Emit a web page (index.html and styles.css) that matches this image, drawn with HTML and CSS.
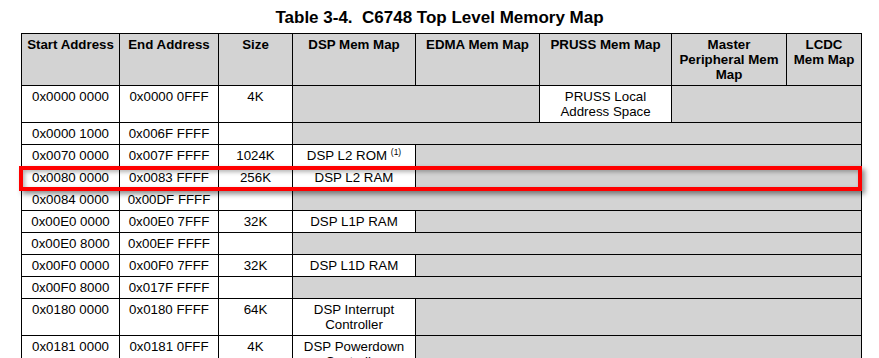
FILE: index.html
```html
<!DOCTYPE html>
<html>
<head>
<meta charset="utf-8">
<link rel="stylesheet" href="styles.css">
</head>
<body>
<div class="page">
  <h1 class="title">Table 3-4.&nbsp; C6748 Top Level Memory Map</h1>
  <div class="table-wrap">
    <table class="memmap">
      <colgroup>
        <col class="c-start"><col class="c-end"><col class="c-size"><col class="c-dsp"><col class="c-edma"><col class="c-pruss"><col class="c-master"><col class="c-lcdc">
      </colgroup>
      <thead>
        <tr>
          <th>Start Address</th>
          <th>End Address</th>
          <th>Size</th>
          <th>DSP Mem Map</th>
          <th>EDMA Mem Map</th>
          <th>PRUSS Mem Map</th>
          <th>Master Peripheral Mem Map</th>
          <th>LCDC Mem Map</th>
        </tr>
      </thead>
      <tbody>
        <tr>
          <td>0x0000 0000</td><td>0x0000 0FFF</td><td>4K</td>
          <td class="gray" colspan="2"></td>
          <td>PRUSS Local Address Space</td>
          <td class="gray" colspan="2"></td>
        </tr>
        <tr>
          <td>0x0000 1000</td><td>0x006F FFFF</td><td></td>
          <td class="gray" colspan="5"></td>
        </tr>
        <tr>
          <td>0x0070 0000</td><td>0x007F FFFF</td><td>1024K</td>
          <td>DSP L2 ROM <sup class="note">(1)</sup></td>
          <td class="gray" colspan="4"></td>
        </tr>
        <tr>
          <td>0x0080 0000</td><td>0x0083 FFFF</td><td>256K</td>
          <td>DSP L2 RAM</td>
          <td class="gray" colspan="4"></td>
        </tr>
        <tr>
          <td>0x0084 0000</td><td>0x00DF FFFF</td><td></td>
          <td class="gray" colspan="5"></td>
        </tr>
        <tr>
          <td>0x00E0 0000</td><td>0x00E0 7FFF</td><td>32K</td>
          <td>DSP L1P RAM</td>
          <td class="gray" colspan="4"></td>
        </tr>
        <tr>
          <td>0x00E0 8000</td><td>0x00EF FFFF</td><td></td>
          <td class="gray" colspan="5"></td>
        </tr>
        <tr>
          <td>0x00F0 0000</td><td>0x00F0 7FFF</td><td>32K</td>
          <td>DSP L1D RAM</td>
          <td class="gray" colspan="4"></td>
        </tr>
        <tr>
          <td>0x00F0 8000</td><td>0x017F FFFF</td><td></td>
          <td class="gray" colspan="5"></td>
        </tr>
        <tr>
          <td>0x0180 0000</td><td>0x0180 FFFF</td><td>64K</td>
          <td>DSP Interrupt Controller</td>
          <td class="gray" colspan="4"></td>
        </tr>
        <tr>
          <td>0x0181 0000</td><td>0x0181 0FFF</td><td>4K</td>
          <td>DSP Powerdown Controller</td>
          <td class="gray" colspan="4"></td>
        </tr>
      </tbody>
    </table>
    <div class="highlight"></div>
  </div>
</div>
</body>
</html>
```
FILE: styles.css
```css
html, body {
  margin: 0;
  padding: 0;
  background: #ffffff;
  overflow: hidden;
}
body {
  font-family: "Liberation Sans", Arial, sans-serif;
  color: #000;
}
.page {
  width: 879px;
  height: 358px;
  overflow: hidden;
}
.title {
  margin: 8px 0 5px 0;
  font-size: 17px;
  line-height: 20px;
  font-weight: bold;
  text-align: center;
  white-space: pre;
}
.table-wrap {
  position: relative;
  margin-left: 21px;
  width: 840px;
}
.memmap {
  border-collapse: collapse;
  table-layout: fixed;
  width: 840px;
  font-size: 13.3px;
  line-height: 15px;
}
.c-start { width: 98px; }
.c-end { width: 99px; }
.c-size { width: 74px; }
.c-dsp { width: 123px; }
.c-edma { width: 124px; }
.c-pruss { width: 132px; }
.c-master { width: 115px; }
.c-lcdc { width: 75px; }
.memmap th,
.memmap td {
  border: 1px solid #000;
  padding: 3px 3px 3px;
  text-align: center;
  vertical-align: top;
}
.memmap th {
  background: #d3d3d3;
  font-weight: bold;
  height: 45px;
}
.memmap td.gray {
  background: #d3d3d3;
}
.note {
  font-size: 8.5px;
  line-height: 0;
  vertical-align: 5px;
}
.highlight {
  position: absolute;
  left: -2px;
  top: 133px;
  width: 843px;
  height: 25px;
  box-sizing: border-box;
  border: 4px solid #ff0000;
  box-shadow: 3px 3px 5px rgba(0, 0, 0, 0.45), inset 2px 2px 4px rgba(0, 0, 0, 0.3);
  pointer-events: none;
}
```
